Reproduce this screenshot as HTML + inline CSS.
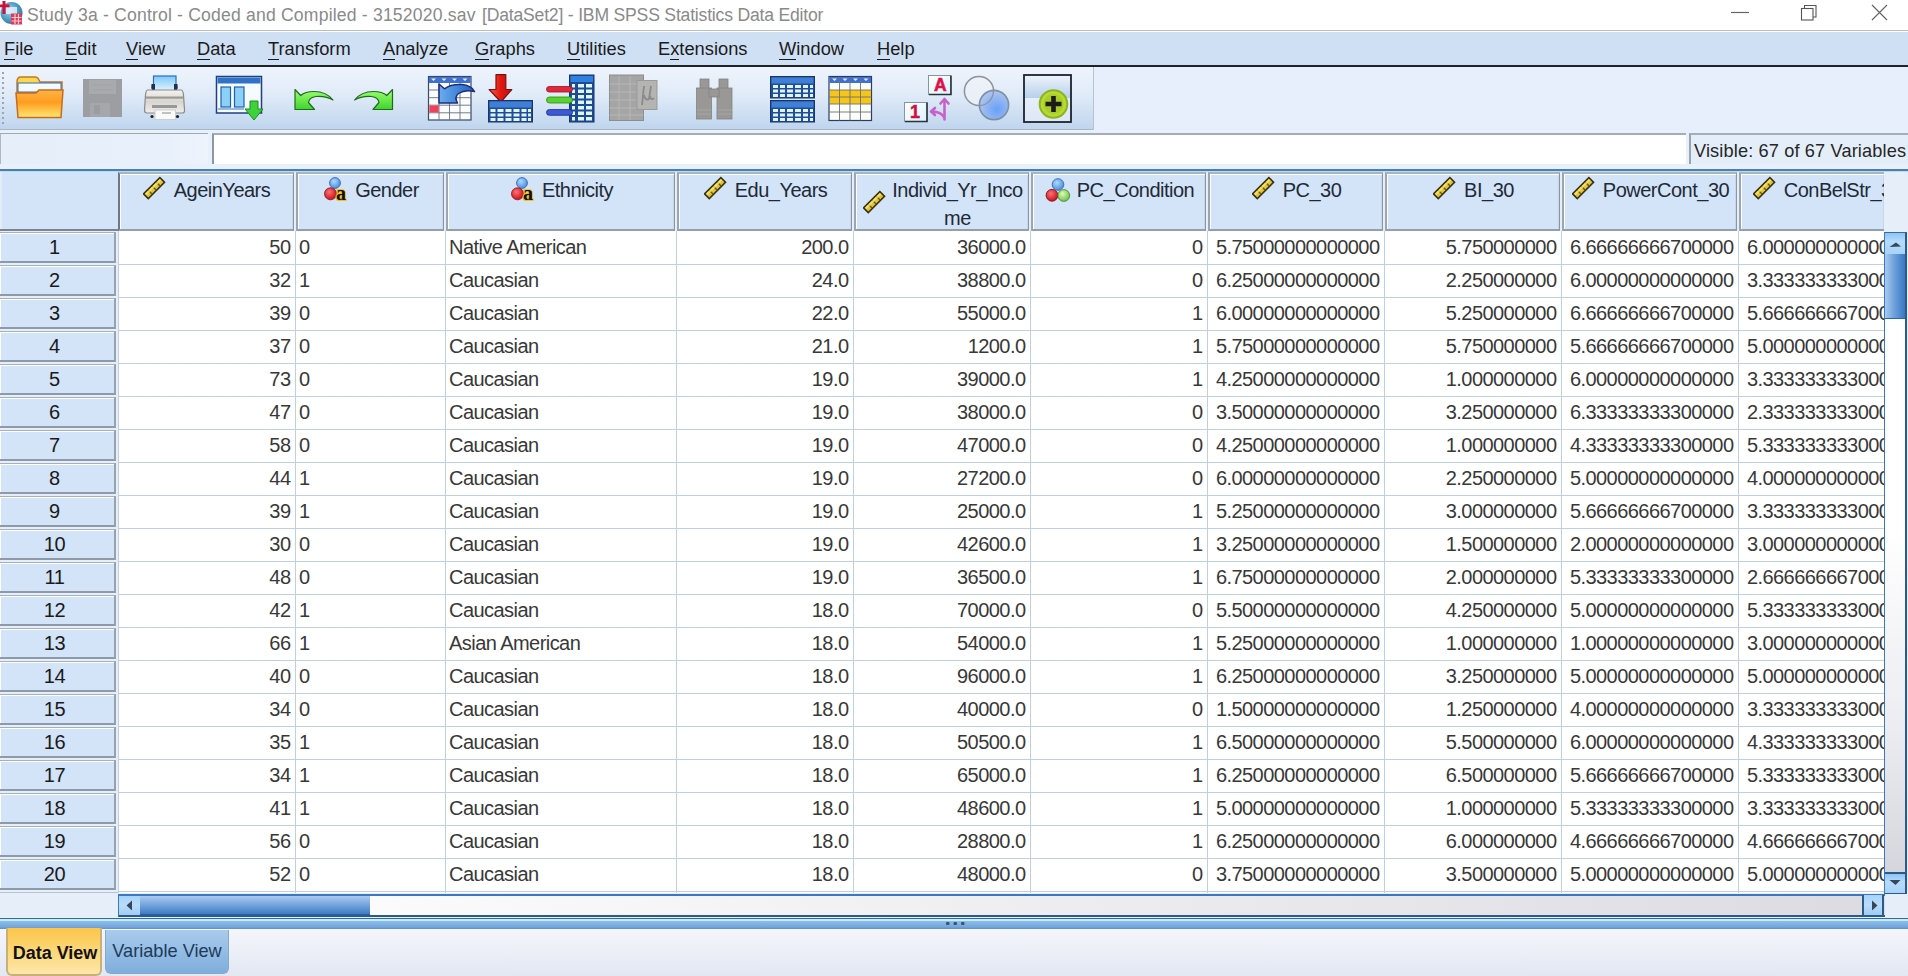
<!DOCTYPE html>
<html><head><meta charset="utf-8"><title>SPSS Data Editor</title>
<style>
*{box-sizing:border-box}
html,body{margin:0;padding:0}
body{width:1908px;height:976px;overflow:hidden;position:relative;background:#fff;font-family:"Liberation Sans",sans-serif;color:#222}
.a{position:absolute}
#title{left:0;top:0;width:1908px;height:31px;background:#fff;border-bottom:1px solid #b9bcc0}
#ttext{left:27px;top:5px;font-size:17.6px;color:#8a8a8a;white-space:nowrap;letter-spacing:0.18px}
#ttext2{left:482px;top:5px;font-size:17.6px;color:#8a8a8a;white-space:nowrap;letter-spacing:-0.2px}
#menu{left:0;top:32px;width:1908px;height:33px;background:#cfe0f4}
.mi{position:absolute;top:38px;font-size:18.3px;color:#1b1b1b;white-space:nowrap}
.mi u{text-decoration:none;border-bottom:1.5px solid #1b1b1b}
#mline{left:0;top:65px;width:1908px;height:2px;background:#1f2328}
#tbar{left:0;top:67px;width:1094px;height:62px;background:linear-gradient(#eef4fc 0%,#e0ebf8 45%,#bfd5ee 100%);border-right:1px solid #b8c8dc}
#tbar2{left:1094px;top:67px;width:814px;height:67px;background:#e6effb}
#tline{left:0;top:129px;width:1094px;height:1px;background:#aab6c2}
#ebar{left:0;top:130px;width:1908px;height:39px;background:#e8f0fb}
#cellbox{left:0;top:133px;width:208px;height:31px;background:linear-gradient(90deg,#e6eefa,#e8f0fb 80%,#eef4fc);border-top:1.5px solid #a0a8b2;border-left:1px solid #b0b8c0}
#inbox{left:212px;top:133px;width:1474px;height:31px;background:#fff;border-top:2px solid #a4aeb8;border-left:2px solid #8e98a2}
#visbox{left:1689px;top:133px;width:219px;height:31px;background:#e4eef9;border-top:2px solid #a4aeb8;border-left:2px solid #9aa4ae}
#vistext{left:1694px;top:141px;font-size:18.2px;letter-spacing:0.13px;color:#262626;white-space:nowrap}
#bline{left:0;top:169px;width:1908px;height:2px;background:#4f7eab}
#bline2{left:0;top:171px;width:1908px;height:1px;background:#b8dcf6}
#gridbg{left:0;top:172px;width:1908px;height:746px;background:#e6eef9}
.hc{position:absolute;top:172px;height:59px;background:#d3e3f8;border-top:2px solid #a4b6c8;border-left:2px solid #9aa6b4;border-right:1px solid #8a96a4;border-bottom:2px solid #949fac;box-shadow:inset 1px 1px 0 #fff, inset -1px 0 0 #c8d6e6}
.ht{position:absolute;left:0;top:2px;text-align:center;font-size:20px;letter-spacing:-0.5px;color:#1e2a36;white-space:nowrap;line-height:22px}
.ht svg{vertical-align:-3px;margin-right:6px}
.ht svg.nc{position:relative;top:2px}
.rh{position:absolute;left:0;width:116px;height:31px;background:#d3e3f8;border-top:1px solid #a4b0bc;border-bottom:2px solid #8e9aa8;border-right:2px solid #96a2ae;box-shadow:inset 1px 1px 0 #fff;text-align:center;font-size:20px;letter-spacing:-0.3px;line-height:29px;color:#1a1a1a;padding-right:5px}
#data{left:118px;top:231px;width:1767px;height:662px;background:#fff;overflow:hidden}
.vl{position:absolute;top:0;width:1px;height:662px;background:#bdd0e6}
.hl{position:absolute;left:0;width:1767px;height:1px;background:#bdd0e6}
.c{position:absolute;height:32px;line-height:33px;font-size:20px;letter-spacing:-0.55px;color:#383838;white-space:nowrap;overflow:hidden}
.r{text-align:right;padding-right:4.5px}
.l{text-align:left;padding-left:3px}
#vsb{left:1885px;top:232px;width:22px;height:662px;background:#fff;border:2px solid #2f5f94;border-top-width:2px}
#hsb{left:118px;top:894px;width:1767px;height:23px;background:#dcdbe1;border:2px solid #2f5f94}
#split{left:0;top:917px;width:1908px;height:12px;background:linear-gradient(#e8f0fb 0,#e8f0fb 1px,#2f6aa8 1px,#2f6aa8 2.5px,#c6ecff 2.5px,#c6ecff 4px,#8fbde8 4px,#73a6dc 10px,#5f8fbf 12px)}
#tabs{left:0;top:929px;width:1908px;height:47px;background:linear-gradient(#f4f6fb,#e2e7f2)}
#tab1{left:6px;top:928px;width:96px;height:48px;background:linear-gradient(#fcc649,#fde7a8);border:2px solid #c9b07a;border-top:none;border-radius:0 0 6px 6px;font-weight:bold;font-size:18px;color:#111;text-align:center;line-height:51px;padding-left:2px}
#tab2{left:105px;top:930px;width:124px;height:44px;background:linear-gradient(#a9cbec,#7faedd);border:1px solid #8aa8c8;border-top:none;border-radius:0 0 6px 6px;font-size:18.2px;color:#1d3a58;text-align:center;line-height:42px}
</style></head><body>

<div id="title" class="a"></div>
<svg class="a" style="left:0;top:0" width="24" height="27" viewBox="0 0 24 27"><defs><radialGradient id="tic" cx=".4" cy=".4" r=".7"><stop offset="0" stop-color="#a8d8ee"/><stop offset=".6" stop-color="#4a9ac0"/><stop offset="1" stop-color="#2a6a98"/></radialGradient></defs><circle cx="11.5" cy="13" r="11" fill="url(#tic)"/><rect x="6" y="7" width="11" height="7" fill="#e8f4ff" opacity=".8"/><rect x="2.5" y="1" width="3" height="13" fill="#d0103a"/><rect x="0" y="4.5" width="9.5" height="2.8" fill="#d0103a"/><rect x="11" y="13.5" width="11" height="11" fill="#d83a5a"/><path d="M11.5 17.5h10M11.5 21h10M15 14v10M18.5 14v10" stroke="#ffc8d0" stroke-width="1.2"/></svg>
<div id="ttext" class="a"><span id="tt1">Study 3a - Control - Coded and Compiled - 3152020.sav</span></div><div id="ttext2" class="a">[DataSet2] - IBM SPSS Statistics Data Editor</div>
<svg class="a" style="left:1720px;top:0" width="188" height="30"><path d="M11 12.5h18" stroke="#666" stroke-width="1.2"/><rect x="81.5" y="8.5" width="11.5" height="11.5" fill="none" stroke="#555" stroke-width="1.1"/><path d="M84.5 8.5V5.5H96V17H93" fill="none" stroke="#555" stroke-width="1.1"/><path d="M152 5L167 20M167 5L152 20" stroke="#666" stroke-width="1.2"/></svg>
<div id="menu" class="a"></div>
<div class="mi" style="left:4px"><u>F</u>ile</div>
<div class="mi" style="left:65px"><u>E</u>dit</div>
<div class="mi" style="left:126px"><u>V</u>iew</div>
<div class="mi" style="left:197px"><u>D</u>ata</div>
<div class="mi" style="left:268px"><u>T</u>ransform</div>
<div class="mi" style="left:383px"><u>A</u>nalyze</div>
<div class="mi" style="left:475px"><u>G</u>raphs</div>
<div class="mi" style="left:567px"><u>U</u>tilities</div>
<div class="mi" style="left:658px">E<u>x</u>tensions</div>
<div class="mi" style="left:779px"><u>W</u>indow</div>
<div class="mi" style="left:877px"><u>H</u>elp</div>
<div id="mline" class="a"></div>
<div id="tbar" class="a"></div><div id="tbar2" class="a"></div><div id="tline" class="a"></div>
<svg class="a" style="left:2px;top:70px" width="4" height="58"><g fill="#9aa6b4"><rect x="0" y="2" width="2" height="2"/><rect x="0" y="7" width="2" height="2"/><rect x="0" y="12" width="2" height="2"/><rect x="0" y="17" width="2" height="2"/><rect x="0" y="22" width="2" height="2"/><rect x="0" y="27" width="2" height="2"/><rect x="0" y="32" width="2" height="2"/><rect x="0" y="37" width="2" height="2"/><rect x="0" y="42" width="2" height="2"/><rect x="0" y="47" width="2" height="2"/><rect x="0" y="52" width="2" height="2"/></g></svg>
<svg class="a" style="left:0;top:0" width="1100" height="130" viewBox="0 0 1100 130">
<defs>
<linearGradient id="gfold" x1="0" y1="0" x2="0" y2="1"><stop offset="0" stop-color="#ffb347"/><stop offset="0.45" stop-color="#ff9d1e"/><stop offset="1" stop-color="#ffe873"/></linearGradient>
<linearGradient id="ggreen" x1="0" y1="0" x2="0" y2="1"><stop offset="0" stop-color="#9cff70"/><stop offset="1" stop-color="#3fd42e"/></linearGradient>
<linearGradient id="gblue" x1="0" y1="0" x2="1" y2="0"><stop offset="0" stop-color="#6aaef0"/><stop offset="1" stop-color="#1f5fc0"/></linearGradient>
<linearGradient id="gred" x1="0" y1="0" x2="1" y2="0"><stop offset="0" stop-color="#ff5a4a"/><stop offset="0.5" stop-color="#e01a10"/><stop offset="1" stop-color="#c01010"/></linearGradient>
<linearGradient id="gpaper" x1="0" y1="0" x2="0" y2="1"><stop offset="0" stop-color="#7ec8f8"/><stop offset="1" stop-color="#eaf6ff"/></linearGradient>
<linearGradient id="gprn" x1="0" y1="0" x2="0" y2="1"><stop offset="0" stop-color="#f4f2ee"/><stop offset="0.5" stop-color="#d8d6d2"/><stop offset="1" stop-color="#f0eeea"/></linearGradient>
<radialGradient id="gcirc" cx="0.6" cy="0.65" r="0.6"><stop offset="0" stop-color="#6aa0f8"/><stop offset="1" stop-color="#a9c3ee"/></radialGradient>
<linearGradient id="gbtn" x1="0" y1="0" x2="0" y2="1"><stop offset="0" stop-color="#eef4fb"/><stop offset="0.48" stop-color="#b9d0ec"/><stop offset="0.5" stop-color="#e6eef9"/><stop offset="1" stop-color="#dde8f6"/></linearGradient>
</defs>
<!-- folder -->
<path d="M17 82 Q17 77 21 77 L35 77 Q38 77 39 80 L40 82 L62 82 L62 92 L17 92 Z" fill="#ffd84a" stroke="#c0782a" stroke-width="1.5"/>
<rect x="18" y="83" width="43" height="9" fill="#f4faff" stroke="#2e6fc0" stroke-width="1"/>
<path d="M16 93 L36 93 L39 90 L63 90 L61 117.5 L18 117.5 Z" fill="url(#gfold)" stroke="#c66a20" stroke-width="1.5"/>
<!-- floppy -->
<rect x="83" y="79" width="39" height="38" fill="#9d9ea2"/>
<rect x="89" y="80" width="27" height="14" fill="#a9aaae"/>
<path d="M93 85h20M93 90h20" stroke="#a0a1a5" stroke-width="1.2"/>
<rect x="90" y="103" width="20" height="14" fill="#a6a7ab"/>
<rect x="94" y="105" width="6" height="9" fill="#9c9da1"/>
<!-- printer -->
<rect x="153.5" y="76" width="22.5" height="16" fill="url(#gpaper)" stroke="#2c70b8" stroke-width="1.2"/>
<path d="M151.5 84 Q150.5 88 152.5 91 L155 91 L155 84Z M177.5 84 Q178.5 88 176.5 91 L174 91 L174 84Z" fill="#1f3050"/>
<path d="M148 90 Q146 90 145.5 95 L144.5 110 Q144.5 113 147 113 L182 113 Q185 113 184.5 110 L183.5 95 Q183 90 181 90 Z" fill="url(#gprn)" stroke="#8c8a88" stroke-width="1.2"/>
<rect x="146" y="96.5" width="37" height="2.2" fill="#9c9994"/>
<rect x="152" y="105" width="25" height="3" fill="#9a9894"/>
<rect x="155" y="110" width="20.5" height="9.5" fill="#fafafa" stroke="#c8c8c8" stroke-width="0.8"/>
<path d="M162 113h9" stroke="#888" stroke-width="1"/>
<circle cx="152" cy="116.5" r="1.6" fill="#222"/><circle cx="177.5" cy="116.5" r="1.6" fill="#222"/>
<!-- data window -->
<rect x="216.5" y="76.5" width="45" height="36.5" fill="#f6fbff" stroke="#1f3f80" stroke-width="1.5"/>
<rect x="217.5" y="77.5" width="43" height="6" fill="#2f72c8"/>
<rect x="221" y="87" width="9.5" height="20" fill="#8dd0f5" stroke="#2060b0" stroke-width="1.2"/>
<rect x="234.5" y="87" width="9.5" height="20" fill="#8dd0f5" stroke="#2060b0" stroke-width="1.2"/>
<path d="M218 109h26" stroke="#4f8fd0" stroke-width="1.2"/>
<path d="M250 101 L258 101 L258 109 L263 109 L254 120 L245 109 L250 109 Z" fill="#3ed23a" stroke="#1e8a20" stroke-width="1"/>
<!-- undo -->
<path d="M295 89.5 L300.7 95.5 C304 92.5 308 91.5 314 91.5 C322 91.5 329 95 333 100 C328 97 322 96 316 96.5 C312 97 309 99 308.5 102.5 L314.5 109.5 L295 109.5 Z" fill="url(#ggreen)" stroke="#1f6a1f" stroke-width="1.2" stroke-linejoin="round"/>
<!-- redo -->
<path d="M392.5 89.5 L386.8 95.5 C383.5 92.5 379.5 91.5 373.5 91.5 C365.5 91.5 358.5 95 354.5 100 C359.5 97 365.5 96 371.5 96.5 C375.5 97 378.5 99 379 102.5 L373 109.5 L392.5 109.5 Z" fill="url(#ggreen)" stroke="#1f6a1f" stroke-width="1.2" stroke-linejoin="round"/>
<!-- goto case -->
<rect x="428.5" y="76.5" width="42.5" height="43.5" fill="#fbfcfe" stroke="#3a4a66" stroke-width="1.2"/>
<rect x="429" y="77" width="41.5" height="6" fill="#3f72d0"/>
<path d="M439 83v37M449.5 83v37M460 83v37M428.5 90h42.5M428.5 97.7h42.5M428.5 105.2h42.5M428.5 112.8h42.5" stroke="#6a7078" stroke-width="0.9"/>
<path d="M431 78.5h5l-2.5 2.5zM441.5 78.5h5l-2.5 2.5zM452 78.5h5l-2.5 2.5zM462.5 78.5h5l-2.5 2.5z" fill="#dfe8ff"/>
<rect x="429.3" y="105.6" width="9.4" height="6.8" fill="#f0405a"/>
<path d="M439 84 L444.5 88.8 C449 85.5 456 84.2 462 84.6 C468 85 472.5 88 474.5 91.5 C468.5 90 462.5 90.8 458.5 93.5 C455.5 95.8 455.5 99.5 457.5 103 L439 103 Z" fill="url(#gblue)" stroke="#1e2e78" stroke-width="1.5" stroke-linejoin="round"/>
<!-- insert cases -->
<path d="M496 74.7 L505.8 74.7 L505.8 89.5 L511.8 89.5 L500.9 102 L489.2 89.5 L496 89.5 Z" fill="url(#gred)" stroke="#7a1010" stroke-width="1.2" stroke-linejoin="round"/>
<rect x="488.5" y="100.5" width="44" height="21.5" fill="#1e4e98" stroke="#18356a" stroke-width="1"/>
<rect x="489.5" y="101.5" width="42" height="6" fill="#3f7fd8"/>
<g fill="#dff4ff">
<rect x="490.5" y="109" width="5" height="3"/><rect x="497.5" y="109" width="6" height="3"/><rect x="505.5" y="109" width="6" height="3"/><rect x="513.5" y="109" width="6" height="3"/><rect x="521.5" y="109" width="5" height="3"/><rect x="528" y="109" width="3" height="3"/>
<rect x="490.5" y="113.5" width="5" height="3"/><rect x="497.5" y="113.5" width="6" height="3"/><rect x="505.5" y="113.5" width="6" height="3"/><rect x="513.5" y="113.5" width="6" height="3"/><rect x="521.5" y="113.5" width="5" height="3"/><rect x="528" y="113.5" width="3" height="3"/>
<rect x="490.5" y="118" width="5" height="3"/><rect x="497.5" y="118" width="6" height="3"/><rect x="505.5" y="118" width="6" height="3"/><rect x="513.5" y="118" width="6" height="3"/><rect x="521.5" y="118" width="5" height="3"/><rect x="528" y="118" width="3" height="3"/>
</g>
<!-- insert variable -->
<rect x="569.5" y="75" width="24.5" height="47" fill="#1d4c96" stroke="#18356a" stroke-width="1"/>
<rect x="570.5" y="76" width="22.5" height="6" fill="#2f80e0"/>
<g fill="#e0f6ff">
<rect x="572" y="84" width="3" height="3.5"/><rect x="578" y="84" width="6" height="3.5"/><rect x="586" y="84" width="6" height="3.5"/>
<rect x="572" y="89.5" width="3" height="3.5"/><rect x="578" y="89.5" width="6" height="3.5"/><rect x="586" y="89.5" width="6" height="3.5"/>
<rect x="572" y="95" width="3" height="3.5"/><rect x="578" y="95" width="6" height="3.5"/><rect x="586" y="95" width="6" height="3.5"/>
<rect x="572" y="100.5" width="3" height="3.5"/><rect x="578" y="100.5" width="6" height="3.5"/><rect x="586" y="100.5" width="6" height="3.5"/>
<rect x="572" y="106" width="3" height="3.5"/><rect x="578" y="106" width="6" height="3.5"/><rect x="586" y="106" width="6" height="3.5"/>
<rect x="572" y="111.5" width="3" height="3.5"/><rect x="578" y="111.5" width="6" height="3.5"/><rect x="586" y="111.5" width="6" height="3.5"/>
<rect x="572" y="117" width="3" height="3.5"/><rect x="578" y="117" width="6" height="3.5"/><rect x="586" y="117" width="6" height="3.5"/>
</g>
<rect x="546.5" y="86.5" width="26" height="5.5" rx="2.7" fill="#e0283a" stroke="#9a1020" stroke-width="0.8"/>
<rect x="546.5" y="97" width="26" height="6" rx="3" fill="#5ad22e" stroke="#2a8a18" stroke-width="0.8"/>
<rect x="546.5" y="109.6" width="26" height="5.7" rx="2.8" fill="#3a5ad8" stroke="#1a2a8a" stroke-width="0.8"/>
<!-- split file (disabled gray) -->
<rect x="609.5" y="75" width="34" height="45.5" fill="#a5a5a5" stroke="#8d8d8d" stroke-width="1"/>
<path d="M619 76v44M630 76v44M609.5 84h34M609.5 92h34M609.5 100h34M609.5 108h34M609.5 115h34" stroke="#b6b6b6" stroke-width="1"/>
<rect x="637" y="80.5" width="20" height="29" fill="#b4b4b2" stroke="#999" stroke-width="1"/>
<path d="M642 105 L644 86 M644 95 Q645 101 649 99 L651 86 M650 96 Q651 101 654 98" fill="none" stroke="#8a8a8a" stroke-width="1.8"/>
<!-- binoculars -->
<g fill="#9a9896" stroke="#858381" stroke-width="0.8">
<rect x="700" y="79" width="9" height="10"/><rect x="719" y="79" width="9" height="10"/>
<rect x="696.5" y="88" width="15" height="31"/><rect x="717" y="88" width="15" height="31"/>
<rect x="709" y="89" width="10" height="8"/>
</g>
<path d="M697 110h14M718 110h14M697 114h14M718 114h14" stroke="#a8a6a4" stroke-width="1"/>
<!-- split tables -->
<g>
<rect x="770.5" y="76.5" width="44" height="21.5" fill="#1e4e98" stroke="#18356a" stroke-width="1"/>
<rect x="771.5" y="77.5" width="42" height="6" fill="#3f7fd8"/>
<rect x="770.5" y="100.5" width="44" height="21.5" fill="#1e4e98" stroke="#18356a" stroke-width="1"/>
<rect x="771.5" y="101.5" width="42" height="6" fill="#3f7fd8"/>
<g fill="#dff4ff">
<rect x="773" y="85" width="5" height="3"/><rect x="780" y="85" width="5" height="3"/><rect x="787" y="85" width="6" height="3"/><rect x="795" y="85" width="6" height="3"/><rect x="803" y="85" width="5" height="3"/><rect x="810" y="85" width="3" height="3"/>
<rect x="773" y="89.5" width="5" height="3"/><rect x="780" y="89.5" width="5" height="3"/><rect x="787" y="89.5" width="6" height="3"/><rect x="795" y="89.5" width="6" height="3"/><rect x="803" y="89.5" width="5" height="3"/><rect x="810" y="89.5" width="3" height="3"/>
<rect x="773" y="94" width="5" height="3"/><rect x="780" y="94" width="5" height="3"/><rect x="787" y="94" width="6" height="3"/><rect x="795" y="94" width="6" height="3"/><rect x="803" y="94" width="5" height="3"/><rect x="810" y="94" width="3" height="3"/>
<rect x="773" y="109" width="5" height="3"/><rect x="780" y="109" width="5" height="3"/><rect x="787" y="109" width="6" height="3"/><rect x="795" y="109" width="6" height="3"/><rect x="803" y="109" width="5" height="3"/><rect x="810" y="109" width="3" height="3"/>
<rect x="773" y="113.5" width="5" height="3"/><rect x="780" y="113.5" width="5" height="3"/><rect x="787" y="113.5" width="6" height="3"/><rect x="795" y="113.5" width="6" height="3"/><rect x="803" y="113.5" width="5" height="3"/><rect x="810" y="113.5" width="3" height="3"/>
<rect x="773" y="118" width="5" height="3"/><rect x="780" y="118" width="5" height="3"/><rect x="787" y="118" width="6" height="3"/><rect x="795" y="118" width="6" height="3"/><rect x="803" y="118" width="5" height="3"/><rect x="810" y="118" width="3" height="3"/>
</g></g>
<!-- yellow table -->
<rect x="829" y="76.5" width="42.5" height="44" fill="#fdfdf8" stroke="#2c3c60" stroke-width="1.2"/>
<rect x="829.5" y="77" width="41.5" height="6" fill="#3f72d0"/>
<rect x="830" y="90" width="41" height="14" fill="#f5c518"/>
<path d="M839.5 77v43.5M850 77v43.5M860.5 77v43.5M829 90h42.5M829 97h42.5M829 104h42.5M829 112h42.5" stroke="#6a7080" stroke-width="0.9"/>
<path d="M832 78.5h5l-2.5 2.5zM842.5 78.5h5l-2.5 2.5zM853 78.5h5l-2.5 2.5zM863.5 78.5h5l-2.5 2.5z" fill="#dfe8ff"/>
<!-- value labels -->
<defs><linearGradient id="gbox" x1="0" y1="0" x2="1" y2="1"><stop offset="0" stop-color="#ffffff"/><stop offset="1" stop-color="#d8f4f8"/></linearGradient></defs>
<rect x="928.5" y="75.5" width="22" height="19" fill="url(#gbox)" stroke="#8a949e" stroke-width="1"/>
<path d="M929 94.5H951V75.5" fill="none" stroke="#2a323c" stroke-width="1.6"/>
<text x="940.3" y="90.8" text-anchor="middle" font-family="Liberation Sans" font-weight="bold" font-size="17.5" fill="#e0104a" stroke="#e0104a" stroke-width="0.6">A</text>
<rect x="904.5" y="102.5" width="22.5" height="19" fill="url(#gbox)" stroke="#8a949e" stroke-width="1"/>
<path d="M905 121.5H927V102.5" fill="none" stroke="#2a323c" stroke-width="1.6"/>
<text x="915" y="118" text-anchor="middle" font-family="Liberation Sans" font-weight="bold" font-size="18" fill="#d0104a" stroke="#d0104a" stroke-width="0.5">1</text>
<g fill="none" stroke="#c860c8" stroke-width="2.6" stroke-linecap="round" stroke-linejoin="round">
<path d="M944.5 119.5 L944.5 100"/>
<path d="M940.5 103.5 L944.5 99 L948.5 103.5"/>
<path d="M944 117 Q941 112 932.5 111.5"/>
<path d="M935 108 L931 111.5 L935 115"/>
</g>
<!-- circles -->
<circle cx="979" cy="91" r="14.6" fill="#f0f2f8" fill-opacity=".7" stroke="#8e9298" stroke-width="1.5"/>
<circle cx="994" cy="105" r="14.6" fill="url(#gcirc)" stroke="#7e8ea6" stroke-width="1.6"/>
<path d="M979.6 105.6 A14.6 14.6 0 0 0 993.4 90.4" fill="none" stroke="#8a92a0" stroke-width="1.3"/>
<!-- plus button -->
<rect x="1024" y="75" width="47" height="47" fill="url(#gbtn)" stroke="#1b2230" stroke-width="1.8"/>
<circle cx="1053.5" cy="104" r="13.8" fill="#b8da30" stroke="#8ab424" stroke-width="2"/>
<circle cx="1053.5" cy="104" r="10" fill="#a8cc28"/>
<path d="M1053.5 96v16M1045.5 104h16" stroke="#1c1c1c" stroke-width="4.6"/>
<!-- toolbar end separator -->
<path d="M1093.5 67v63" stroke="#b4c2d4" stroke-width="1"/>
</svg>

<div id="ebar" class="a"></div><div id="cellbox" class="a"></div><div id="inbox" class="a"></div><div id="visbox" class="a"></div>
<div id="vistext" class="a">Visible: 67 of 67 Variables</div>
<div id="gridbg" class="a"></div>
<div id="bline" class="a"></div><div id="bline2" class="a"></div>
<div class="hc" style="left:0;width:118px;border-left:none;border-top:none;border-right:none;border-bottom:2px solid #7a8490;box-shadow:inset 2px 0 0 #e2ecf8;background:linear-gradient(#c8ecfc 0,#c8ecfc 1px,#d3e3f8 1px)"></div>
<div class="hc" style="left:118px;width:176px;border-left-color:#6e7884;"><div class="ht" style="width:173px"><svg width="25" height="24" viewBox="0 0 25 24"><g transform="translate(-1.5 0) rotate(-45 12.5 12)"><rect x="1" y="8.8" width="23" height="6.6" fill="#e0c23a" stroke="#38300e" stroke-width="1.6"/><path d="M6.8 9.3v5.6M12.5 9.3v5.6M18.2 9.3v5.6" stroke="#6a5a10" stroke-width="1.4"/><rect x="2" y="9.8" width="21" height="2" fill="#f6e878" opacity=".8"/></g></svg>AgeinYears</div></div>
<div class="hc" style="left:296px;width:148px;"><div class="ht" style="width:146px"><svg width="26" height="24" viewBox="0 0 26 24" style="overflow:visible"><defs><radialGradient id="rb" cx=".4" cy=".35" r=".7"><stop offset="0" stop-color="#ff7070"/><stop offset="1" stop-color="#c00c18"/></radialGradient><radialGradient id="bb" cx=".4" cy=".35" r=".7"><stop offset="0" stop-color="#a8dcff"/><stop offset="1" stop-color="#4a86d8"/></radialGradient></defs><circle cx="12" cy="7" r="5.4" fill="url(#bb)" stroke="#3a70b8" stroke-width="1"/><circle cx="7.5" cy="17.8" r="6" fill="url(#rb)" stroke="#8a0c10" stroke-width="0.8"/><text x="13" y="23.5" font-family="Liberation Serif" font-weight="bold" font-size="20" fill="#111" stroke="#f2c020" stroke-width="2.2" paint-order="stroke">a</text></svg>Gender</div></div>
<div class="hc" style="left:446px;width:229px;"><div class="ht" style="width:227px"><svg width="26" height="24" viewBox="0 0 26 24" style="overflow:visible"><defs><radialGradient id="rb" cx=".4" cy=".35" r=".7"><stop offset="0" stop-color="#ff7070"/><stop offset="1" stop-color="#c00c18"/></radialGradient><radialGradient id="bb" cx=".4" cy=".35" r=".7"><stop offset="0" stop-color="#a8dcff"/><stop offset="1" stop-color="#4a86d8"/></radialGradient></defs><circle cx="12" cy="7" r="5.4" fill="url(#bb)" stroke="#3a70b8" stroke-width="1"/><circle cx="7.5" cy="17.8" r="6" fill="url(#rb)" stroke="#8a0c10" stroke-width="0.8"/><text x="13" y="23.5" font-family="Liberation Serif" font-weight="bold" font-size="20" fill="#111" stroke="#f2c020" stroke-width="2.2" paint-order="stroke">a</text></svg>Ethnicity</div></div>
<div class="hc" style="left:677px;width:175px;"><div class="ht" style="width:173px"><svg width="25" height="24" viewBox="0 0 25 24"><g transform="translate(-1.5 0) rotate(-45 12.5 12)"><rect x="1" y="8.8" width="23" height="6.6" fill="#e0c23a" stroke="#38300e" stroke-width="1.6"/><path d="M6.8 9.3v5.6M12.5 9.3v5.6M18.2 9.3v5.6" stroke="#6a5a10" stroke-width="1.4"/><rect x="2" y="9.8" width="21" height="2" fill="#f6e878" opacity=".8"/></g></svg>Edu_Years</div></div>
<div class="hc" style="left:854px;width:175px;"><div class="ht" style="top:5px;padding-left:30px;width:173px">Individ_Yr_Inco</div><div class="ht" style="top:33px;padding-left:30px;width:173px">me</div><div style="position:absolute;left:7px;top:16px"><svg width="25" height="24" viewBox="0 0 25 24"><g transform="translate(-1.5 0) rotate(-45 12.5 12)"><rect x="1" y="8.8" width="23" height="6.6" fill="#e0c23a" stroke="#38300e" stroke-width="1.6"/><path d="M6.8 9.3v5.6M12.5 9.3v5.6M18.2 9.3v5.6" stroke="#6a5a10" stroke-width="1.4"/><rect x="2" y="9.8" width="21" height="2" fill="#f6e878" opacity=".8"/></g></svg></div></div>
<div class="hc" style="left:1031px;width:175px;"><div class="ht" style="width:173px"><svg class="nc" width="26" height="24" viewBox="0 0 26 24"><defs><radialGradient id="rb2" cx=".4" cy=".35" r=".7"><stop offset="0" stop-color="#ff7070"/><stop offset="1" stop-color="#c00c18"/></radialGradient><radialGradient id="bb2" cx=".4" cy=".35" r=".7"><stop offset="0" stop-color="#a8dcff"/><stop offset="1" stop-color="#4a86d8"/></radialGradient><radialGradient id="gb2" cx=".4" cy=".35" r=".7"><stop offset="0" stop-color="#d8ffb0"/><stop offset="1" stop-color="#6cb848"/></radialGradient></defs><circle cx="13" cy="6.5" r="5.8" fill="url(#bb2)" stroke="#3a70b8" stroke-width="1"/><circle cx="7" cy="17.3" r="5.9" fill="url(#rb2)" stroke="#8a0c10" stroke-width="0.9"/><circle cx="18.8" cy="17.5" r="5.9" fill="url(#gb2)" stroke="#4a9030" stroke-width="0.9"/></svg>PC_Condition</div></div>
<div class="hc" style="left:1208px;width:175px;"><div class="ht" style="width:173px"><svg width="25" height="24" viewBox="0 0 25 24"><g transform="translate(-1.5 0) rotate(-45 12.5 12)"><rect x="1" y="8.8" width="23" height="6.6" fill="#e0c23a" stroke="#38300e" stroke-width="1.6"/><path d="M6.8 9.3v5.6M12.5 9.3v5.6M18.2 9.3v5.6" stroke="#6a5a10" stroke-width="1.4"/><rect x="2" y="9.8" width="21" height="2" fill="#f6e878" opacity=".8"/></g></svg>PC_30</div></div>
<div class="hc" style="left:1385px;width:175px;"><div class="ht" style="width:173px"><svg width="25" height="24" viewBox="0 0 25 24"><g transform="translate(-1.5 0) rotate(-45 12.5 12)"><rect x="1" y="8.8" width="23" height="6.6" fill="#e0c23a" stroke="#38300e" stroke-width="1.6"/><path d="M6.8 9.3v5.6M12.5 9.3v5.6M18.2 9.3v5.6" stroke="#6a5a10" stroke-width="1.4"/><rect x="2" y="9.8" width="21" height="2" fill="#f6e878" opacity=".8"/></g></svg>BI_30</div></div>
<div class="hc" style="left:1562px;width:175px;"><div class="ht" style="width:173px"><svg width="25" height="24" viewBox="0 0 25 24"><g transform="translate(-1.5 0) rotate(-45 12.5 12)"><rect x="1" y="8.8" width="23" height="6.6" fill="#e0c23a" stroke="#38300e" stroke-width="1.6"/><path d="M6.8 9.3v5.6M12.5 9.3v5.6M18.2 9.3v5.6" stroke="#6a5a10" stroke-width="1.4"/><rect x="2" y="9.8" width="21" height="2" fill="#f6e878" opacity=".8"/></g></svg>PowerCont_30</div></div>
<div class="hc" style="left:1739px;width:145px;border-right:none;overflow:hidden;"><div class="ht" style="width:173px"><svg width="25" height="24" viewBox="0 0 25 24"><g transform="translate(-1.5 0) rotate(-45 12.5 12)"><rect x="1" y="8.8" width="23" height="6.6" fill="#e0c23a" stroke="#38300e" stroke-width="1.6"/><path d="M6.8 9.3v5.6M12.5 9.3v5.6M18.2 9.3v5.6" stroke="#6a5a10" stroke-width="1.4"/><rect x="2" y="9.8" width="21" height="2" fill="#f6e878" opacity=".8"/></g></svg>ConBelStr_30</div></div>
<div class="rh" style="top:232px">1</div>
<div class="rh" style="top:265px">2</div>
<div class="rh" style="top:298px">3</div>
<div class="rh" style="top:331px">4</div>
<div class="rh" style="top:364px">5</div>
<div class="rh" style="top:397px">6</div>
<div class="rh" style="top:430px">7</div>
<div class="rh" style="top:463px">8</div>
<div class="rh" style="top:496px">9</div>
<div class="rh" style="top:529px">10</div>
<div class="rh" style="top:562px">11</div>
<div class="rh" style="top:595px">12</div>
<div class="rh" style="top:628px">13</div>
<div class="rh" style="top:661px">14</div>
<div class="rh" style="top:694px">15</div>
<div class="rh" style="top:727px">16</div>
<div class="rh" style="top:760px">17</div>
<div class="rh" style="top:793px">18</div>
<div class="rh" style="top:826px">19</div>
<div class="rh" style="top:859px">20</div>
<div id="data" class="a">
<div class="vl" style="left:0px"></div>
<div class="vl" style="left:177px"></div>
<div class="vl" style="left:327px"></div>
<div class="vl" style="left:558px"></div>
<div class="vl" style="left:735px"></div>
<div class="vl" style="left:912px"></div>
<div class="vl" style="left:1089px"></div>
<div class="vl" style="left:1266px"></div>
<div class="vl" style="left:1443px"></div>
<div class="vl" style="left:1620px"></div>
<div class="hl" style="top:33px"></div>
<div class="hl" style="top:66px"></div>
<div class="hl" style="top:99px"></div>
<div class="hl" style="top:132px"></div>
<div class="hl" style="top:165px"></div>
<div class="hl" style="top:198px"></div>
<div class="hl" style="top:231px"></div>
<div class="hl" style="top:264px"></div>
<div class="hl" style="top:297px"></div>
<div class="hl" style="top:330px"></div>
<div class="hl" style="top:363px"></div>
<div class="hl" style="top:396px"></div>
<div class="hl" style="top:429px"></div>
<div class="hl" style="top:462px"></div>
<div class="hl" style="top:495px"></div>
<div class="hl" style="top:528px"></div>
<div class="hl" style="top:561px"></div>
<div class="hl" style="top:594px"></div>
<div class="hl" style="top:627px"></div>
<div class="hl" style="top:660px"></div>
<div class="c r" style="left:1px;top:0px;width:176px">50</div>
<div class="c l" style="left:178px;top:0px;width:149px">0</div>
<div class="c l" style="left:328px;top:0px;width:230px">Native American</div>
<div class="c r" style="left:559px;top:0px;width:176px">200.0</div>
<div class="c r" style="left:736px;top:0px;width:176px">36000.0</div>
<div class="c r" style="left:913px;top:0px;width:176px">0</div>
<div class="c r" style="left:1090px;top:0px;width:176px">5.75000000000000</div>
<div class="c r" style="left:1267px;top:0px;width:176px">5.750000000</div>
<div class="c r" style="left:1444px;top:0px;width:176px">6.66666666700000</div>
<div class="c r" style="left:1621px;top:0px;width:176px">6.00000000000000</div>
<div class="c r" style="left:1px;top:33px;width:176px">32</div>
<div class="c l" style="left:178px;top:33px;width:149px">1</div>
<div class="c l" style="left:328px;top:33px;width:230px">Caucasian</div>
<div class="c r" style="left:559px;top:33px;width:176px">24.0</div>
<div class="c r" style="left:736px;top:33px;width:176px">38800.0</div>
<div class="c r" style="left:913px;top:33px;width:176px">0</div>
<div class="c r" style="left:1090px;top:33px;width:176px">6.25000000000000</div>
<div class="c r" style="left:1267px;top:33px;width:176px">2.250000000</div>
<div class="c r" style="left:1444px;top:33px;width:176px">6.00000000000000</div>
<div class="c r" style="left:1621px;top:33px;width:176px">3.33333333300000</div>
<div class="c r" style="left:1px;top:66px;width:176px">39</div>
<div class="c l" style="left:178px;top:66px;width:149px">0</div>
<div class="c l" style="left:328px;top:66px;width:230px">Caucasian</div>
<div class="c r" style="left:559px;top:66px;width:176px">22.0</div>
<div class="c r" style="left:736px;top:66px;width:176px">55000.0</div>
<div class="c r" style="left:913px;top:66px;width:176px">1</div>
<div class="c r" style="left:1090px;top:66px;width:176px">6.00000000000000</div>
<div class="c r" style="left:1267px;top:66px;width:176px">5.250000000</div>
<div class="c r" style="left:1444px;top:66px;width:176px">6.66666666700000</div>
<div class="c r" style="left:1621px;top:66px;width:176px">5.66666666700000</div>
<div class="c r" style="left:1px;top:99px;width:176px">37</div>
<div class="c l" style="left:178px;top:99px;width:149px">0</div>
<div class="c l" style="left:328px;top:99px;width:230px">Caucasian</div>
<div class="c r" style="left:559px;top:99px;width:176px">21.0</div>
<div class="c r" style="left:736px;top:99px;width:176px">1200.0</div>
<div class="c r" style="left:913px;top:99px;width:176px">1</div>
<div class="c r" style="left:1090px;top:99px;width:176px">5.75000000000000</div>
<div class="c r" style="left:1267px;top:99px;width:176px">5.750000000</div>
<div class="c r" style="left:1444px;top:99px;width:176px">5.66666666700000</div>
<div class="c r" style="left:1621px;top:99px;width:176px">5.00000000000000</div>
<div class="c r" style="left:1px;top:132px;width:176px">73</div>
<div class="c l" style="left:178px;top:132px;width:149px">0</div>
<div class="c l" style="left:328px;top:132px;width:230px">Caucasian</div>
<div class="c r" style="left:559px;top:132px;width:176px">19.0</div>
<div class="c r" style="left:736px;top:132px;width:176px">39000.0</div>
<div class="c r" style="left:913px;top:132px;width:176px">1</div>
<div class="c r" style="left:1090px;top:132px;width:176px">4.25000000000000</div>
<div class="c r" style="left:1267px;top:132px;width:176px">1.000000000</div>
<div class="c r" style="left:1444px;top:132px;width:176px">6.00000000000000</div>
<div class="c r" style="left:1621px;top:132px;width:176px">3.33333333300000</div>
<div class="c r" style="left:1px;top:165px;width:176px">47</div>
<div class="c l" style="left:178px;top:165px;width:149px">0</div>
<div class="c l" style="left:328px;top:165px;width:230px">Caucasian</div>
<div class="c r" style="left:559px;top:165px;width:176px">19.0</div>
<div class="c r" style="left:736px;top:165px;width:176px">38000.0</div>
<div class="c r" style="left:913px;top:165px;width:176px">0</div>
<div class="c r" style="left:1090px;top:165px;width:176px">3.50000000000000</div>
<div class="c r" style="left:1267px;top:165px;width:176px">3.250000000</div>
<div class="c r" style="left:1444px;top:165px;width:176px">6.33333333300000</div>
<div class="c r" style="left:1621px;top:165px;width:176px">2.33333333300000</div>
<div class="c r" style="left:1px;top:198px;width:176px">58</div>
<div class="c l" style="left:178px;top:198px;width:149px">0</div>
<div class="c l" style="left:328px;top:198px;width:230px">Caucasian</div>
<div class="c r" style="left:559px;top:198px;width:176px">19.0</div>
<div class="c r" style="left:736px;top:198px;width:176px">47000.0</div>
<div class="c r" style="left:913px;top:198px;width:176px">0</div>
<div class="c r" style="left:1090px;top:198px;width:176px">4.25000000000000</div>
<div class="c r" style="left:1267px;top:198px;width:176px">1.000000000</div>
<div class="c r" style="left:1444px;top:198px;width:176px">4.33333333300000</div>
<div class="c r" style="left:1621px;top:198px;width:176px">5.33333333300000</div>
<div class="c r" style="left:1px;top:231px;width:176px">44</div>
<div class="c l" style="left:178px;top:231px;width:149px">1</div>
<div class="c l" style="left:328px;top:231px;width:230px">Caucasian</div>
<div class="c r" style="left:559px;top:231px;width:176px">19.0</div>
<div class="c r" style="left:736px;top:231px;width:176px">27200.0</div>
<div class="c r" style="left:913px;top:231px;width:176px">0</div>
<div class="c r" style="left:1090px;top:231px;width:176px">6.00000000000000</div>
<div class="c r" style="left:1267px;top:231px;width:176px">2.250000000</div>
<div class="c r" style="left:1444px;top:231px;width:176px">5.00000000000000</div>
<div class="c r" style="left:1621px;top:231px;width:176px">4.00000000000000</div>
<div class="c r" style="left:1px;top:264px;width:176px">39</div>
<div class="c l" style="left:178px;top:264px;width:149px">1</div>
<div class="c l" style="left:328px;top:264px;width:230px">Caucasian</div>
<div class="c r" style="left:559px;top:264px;width:176px">19.0</div>
<div class="c r" style="left:736px;top:264px;width:176px">25000.0</div>
<div class="c r" style="left:913px;top:264px;width:176px">1</div>
<div class="c r" style="left:1090px;top:264px;width:176px">5.25000000000000</div>
<div class="c r" style="left:1267px;top:264px;width:176px">3.000000000</div>
<div class="c r" style="left:1444px;top:264px;width:176px">5.66666666700000</div>
<div class="c r" style="left:1621px;top:264px;width:176px">3.33333333300000</div>
<div class="c r" style="left:1px;top:297px;width:176px">30</div>
<div class="c l" style="left:178px;top:297px;width:149px">0</div>
<div class="c l" style="left:328px;top:297px;width:230px">Caucasian</div>
<div class="c r" style="left:559px;top:297px;width:176px">19.0</div>
<div class="c r" style="left:736px;top:297px;width:176px">42600.0</div>
<div class="c r" style="left:913px;top:297px;width:176px">1</div>
<div class="c r" style="left:1090px;top:297px;width:176px">3.25000000000000</div>
<div class="c r" style="left:1267px;top:297px;width:176px">1.500000000</div>
<div class="c r" style="left:1444px;top:297px;width:176px">2.00000000000000</div>
<div class="c r" style="left:1621px;top:297px;width:176px">3.00000000000000</div>
<div class="c r" style="left:1px;top:330px;width:176px">48</div>
<div class="c l" style="left:178px;top:330px;width:149px">0</div>
<div class="c l" style="left:328px;top:330px;width:230px">Caucasian</div>
<div class="c r" style="left:559px;top:330px;width:176px">19.0</div>
<div class="c r" style="left:736px;top:330px;width:176px">36500.0</div>
<div class="c r" style="left:913px;top:330px;width:176px">1</div>
<div class="c r" style="left:1090px;top:330px;width:176px">6.75000000000000</div>
<div class="c r" style="left:1267px;top:330px;width:176px">2.000000000</div>
<div class="c r" style="left:1444px;top:330px;width:176px">5.33333333300000</div>
<div class="c r" style="left:1621px;top:330px;width:176px">2.66666666700000</div>
<div class="c r" style="left:1px;top:363px;width:176px">42</div>
<div class="c l" style="left:178px;top:363px;width:149px">1</div>
<div class="c l" style="left:328px;top:363px;width:230px">Caucasian</div>
<div class="c r" style="left:559px;top:363px;width:176px">18.0</div>
<div class="c r" style="left:736px;top:363px;width:176px">70000.0</div>
<div class="c r" style="left:913px;top:363px;width:176px">0</div>
<div class="c r" style="left:1090px;top:363px;width:176px">5.50000000000000</div>
<div class="c r" style="left:1267px;top:363px;width:176px">4.250000000</div>
<div class="c r" style="left:1444px;top:363px;width:176px">5.00000000000000</div>
<div class="c r" style="left:1621px;top:363px;width:176px">5.33333333300000</div>
<div class="c r" style="left:1px;top:396px;width:176px">66</div>
<div class="c l" style="left:178px;top:396px;width:149px">1</div>
<div class="c l" style="left:328px;top:396px;width:230px">Asian American</div>
<div class="c r" style="left:559px;top:396px;width:176px">18.0</div>
<div class="c r" style="left:736px;top:396px;width:176px">54000.0</div>
<div class="c r" style="left:913px;top:396px;width:176px">1</div>
<div class="c r" style="left:1090px;top:396px;width:176px">5.25000000000000</div>
<div class="c r" style="left:1267px;top:396px;width:176px">1.000000000</div>
<div class="c r" style="left:1444px;top:396px;width:176px">1.00000000000000</div>
<div class="c r" style="left:1621px;top:396px;width:176px">3.00000000000000</div>
<div class="c r" style="left:1px;top:429px;width:176px">40</div>
<div class="c l" style="left:178px;top:429px;width:149px">0</div>
<div class="c l" style="left:328px;top:429px;width:230px">Caucasian</div>
<div class="c r" style="left:559px;top:429px;width:176px">18.0</div>
<div class="c r" style="left:736px;top:429px;width:176px">96000.0</div>
<div class="c r" style="left:913px;top:429px;width:176px">1</div>
<div class="c r" style="left:1090px;top:429px;width:176px">6.25000000000000</div>
<div class="c r" style="left:1267px;top:429px;width:176px">3.250000000</div>
<div class="c r" style="left:1444px;top:429px;width:176px">5.00000000000000</div>
<div class="c r" style="left:1621px;top:429px;width:176px">5.00000000000000</div>
<div class="c r" style="left:1px;top:462px;width:176px">34</div>
<div class="c l" style="left:178px;top:462px;width:149px">0</div>
<div class="c l" style="left:328px;top:462px;width:230px">Caucasian</div>
<div class="c r" style="left:559px;top:462px;width:176px">18.0</div>
<div class="c r" style="left:736px;top:462px;width:176px">40000.0</div>
<div class="c r" style="left:913px;top:462px;width:176px">0</div>
<div class="c r" style="left:1090px;top:462px;width:176px">1.50000000000000</div>
<div class="c r" style="left:1267px;top:462px;width:176px">1.250000000</div>
<div class="c r" style="left:1444px;top:462px;width:176px">4.00000000000000</div>
<div class="c r" style="left:1621px;top:462px;width:176px">3.33333333300000</div>
<div class="c r" style="left:1px;top:495px;width:176px">35</div>
<div class="c l" style="left:178px;top:495px;width:149px">1</div>
<div class="c l" style="left:328px;top:495px;width:230px">Caucasian</div>
<div class="c r" style="left:559px;top:495px;width:176px">18.0</div>
<div class="c r" style="left:736px;top:495px;width:176px">50500.0</div>
<div class="c r" style="left:913px;top:495px;width:176px">1</div>
<div class="c r" style="left:1090px;top:495px;width:176px">6.50000000000000</div>
<div class="c r" style="left:1267px;top:495px;width:176px">5.500000000</div>
<div class="c r" style="left:1444px;top:495px;width:176px">6.00000000000000</div>
<div class="c r" style="left:1621px;top:495px;width:176px">4.33333333300000</div>
<div class="c r" style="left:1px;top:528px;width:176px">34</div>
<div class="c l" style="left:178px;top:528px;width:149px">1</div>
<div class="c l" style="left:328px;top:528px;width:230px">Caucasian</div>
<div class="c r" style="left:559px;top:528px;width:176px">18.0</div>
<div class="c r" style="left:736px;top:528px;width:176px">65000.0</div>
<div class="c r" style="left:913px;top:528px;width:176px">1</div>
<div class="c r" style="left:1090px;top:528px;width:176px">6.25000000000000</div>
<div class="c r" style="left:1267px;top:528px;width:176px">6.500000000</div>
<div class="c r" style="left:1444px;top:528px;width:176px">5.66666666700000</div>
<div class="c r" style="left:1621px;top:528px;width:176px">5.33333333300000</div>
<div class="c r" style="left:1px;top:561px;width:176px">41</div>
<div class="c l" style="left:178px;top:561px;width:149px">1</div>
<div class="c l" style="left:328px;top:561px;width:230px">Caucasian</div>
<div class="c r" style="left:559px;top:561px;width:176px">18.0</div>
<div class="c r" style="left:736px;top:561px;width:176px">48600.0</div>
<div class="c r" style="left:913px;top:561px;width:176px">1</div>
<div class="c r" style="left:1090px;top:561px;width:176px">5.00000000000000</div>
<div class="c r" style="left:1267px;top:561px;width:176px">1.000000000</div>
<div class="c r" style="left:1444px;top:561px;width:176px">5.33333333300000</div>
<div class="c r" style="left:1621px;top:561px;width:176px">3.33333333300000</div>
<div class="c r" style="left:1px;top:594px;width:176px">56</div>
<div class="c l" style="left:178px;top:594px;width:149px">0</div>
<div class="c l" style="left:328px;top:594px;width:230px">Caucasian</div>
<div class="c r" style="left:559px;top:594px;width:176px">18.0</div>
<div class="c r" style="left:736px;top:594px;width:176px">28800.0</div>
<div class="c r" style="left:913px;top:594px;width:176px">1</div>
<div class="c r" style="left:1090px;top:594px;width:176px">6.25000000000000</div>
<div class="c r" style="left:1267px;top:594px;width:176px">6.000000000</div>
<div class="c r" style="left:1444px;top:594px;width:176px">4.66666666700000</div>
<div class="c r" style="left:1621px;top:594px;width:176px">4.66666666700000</div>
<div class="c r" style="left:1px;top:627px;width:176px">52</div>
<div class="c l" style="left:178px;top:627px;width:149px">0</div>
<div class="c l" style="left:328px;top:627px;width:230px">Caucasian</div>
<div class="c r" style="left:559px;top:627px;width:176px">18.0</div>
<div class="c r" style="left:736px;top:627px;width:176px">48000.0</div>
<div class="c r" style="left:913px;top:627px;width:176px">0</div>
<div class="c r" style="left:1090px;top:627px;width:176px">3.75000000000000</div>
<div class="c r" style="left:1267px;top:627px;width:176px">3.500000000</div>
<div class="c r" style="left:1444px;top:627px;width:176px">5.00000000000000</div>
<div class="c r" style="left:1621px;top:627px;width:176px">5.00000000000000</div>
</div>
<div class="a" style="left:1884px;top:232px;width:23px;height:662px;background:linear-gradient(#ffffff 45%,#ececf2 75%,#d2d2da);border-left:1px solid #3a78c0;border-right:2px solid #2c5a8a;border-top:1px solid #3a6aa0;border-bottom:1px solid #2c5a8a"></div>
<div class="a" style="left:1885px;top:233px;width:20px;height:21px;background:linear-gradient(#8cc4f4,#b4dcfc 40%,#a8d2f8)"></div>
<svg class="a" style="left:1885px;top:233px" width="20" height="21"><path d="M4.5 14 L11 9.5 L16 13.5 Z" fill="#3a4656"/></svg>
<div class="a" style="left:1885px;top:254px;width:20px;height:65px;background:linear-gradient(90deg,#a9cbef,#6ea2da 45%,#3a78c4);border-bottom:1px solid #2f64a8"></div>
<div class="a" style="left:1885px;top:872px;width:20px;height:21px;background:linear-gradient(#8cc4f4,#b4dcfc 40%,#a8d2f8);border-top:2px solid #2c5a8a"></div>
<svg class="a" style="left:1885px;top:874px" width="20" height="19"><path d="M4.5 6 L15.5 6 L10.5 11 Z" fill="#3a4656"/></svg>
<div class="a" style="left:118px;top:894px;width:1767px;height:23px;background:linear-gradient(90deg,#ffffff,#f6f6f8 30%,#dcdbe2);border-top:2px solid #3a78c0;border-bottom:2px solid #2c5a8a;border-left:1px solid #3a78c0"></div>
<div class="a" style="left:119px;top:896px;width:21px;height:19px;background:linear-gradient(#a8d4fa,#b8ddfc 50%,#a0ccf4)"></div>
<svg class="a" style="left:119px;top:896px" width="21" height="19"><path d="M13 4.5 L13 14.5 L7.5 9.5 Z" fill="#3a4656"/></svg>
<div class="a" style="left:140px;top:896px;width:230px;height:19px;background:linear-gradient(#aacaee,#78a8de 45%,#3e7cc6);border-bottom:1px solid #2a5ea8"></div>
<div class="a" style="left:1862px;top:895px;width:22px;height:21px;background:linear-gradient(#a8d4fa,#b8ddfc 50%,#a0ccf4);border-left:2px solid #2c5a8a;border-right:2px solid #2c5a8a;border-bottom:1px solid #2c5a8a"></div>
<svg class="a" style="left:1864px;top:896px" width="20" height="19"><path d="M8 4.5 L8 14.5 L13.5 9.5 Z" fill="#3a4656"/></svg>
<div class="a" style="left:0;top:892px;width:118px;height:1px;background:#b8c4d0"></div>
<svg class="a" style="left:945px;top:921px" width="24" height="6"><g fill="#34557e"><rect x="1" y="1" width="3.5" height="3" rx="1"/><rect x="8.5" y="1" width="3.5" height="3" rx="1"/><rect x="16" y="1" width="3.5" height="3" rx="1"/></g></svg>

<div id="split" class="a"></div>
<svg class="a" style="left:945px;top:921px" width="24" height="6"><g fill="#34557e"><rect x="1" y="1" width="3.5" height="3" rx="1"/><rect x="8.5" y="1" width="3.5" height="3" rx="1"/><rect x="16" y="1" width="3.5" height="3" rx="1"/></g></svg>
<div id="tabs" class="a"></div>
<div id="tab1" class="a">Data View</div><div id="tab2" class="a">Variable View</div>
</body></html>
